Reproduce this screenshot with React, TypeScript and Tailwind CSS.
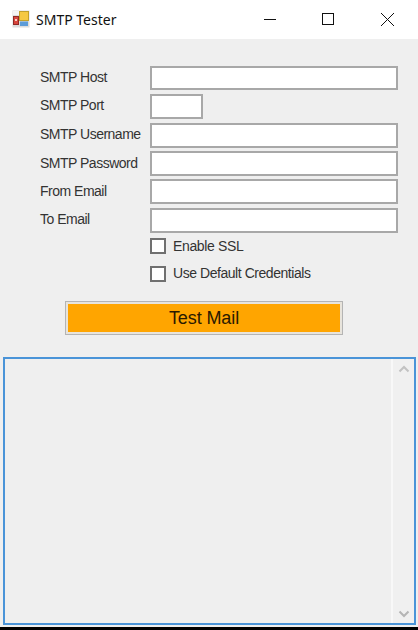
import React from 'react';

const fields = [
    { label: 'SMTP Host', inputClass: 'w-[248px]', rowClass: 'h-[24px] mb-[4px]', textClass: 'pb-[1px]' },
    { label: 'SMTP Port', inputClass: 'w-[53px]', rowClass: 'h-[25px] mb-[4px]', textClass: 'pb-[3px]' },
    { label: 'SMTP Username', inputClass: 'w-[248px]', rowClass: 'h-[25px] mb-[3px]', textClass: 'pb-[3px]' },
    { label: 'SMTP Password', inputClass: 'w-[248px]', rowClass: 'h-[25px] mb-[3px]', textClass: 'pb-[1px]' },
    { label: 'From Email', inputClass: 'w-[248px]', rowClass: 'h-[25px] mb-[4px]', textClass: 'pb-[1px]' },
    { label: 'To Email', inputClass: 'w-[248px]', rowClass: 'h-[25px] mb-[5px]', textClass: 'pb-[2px]' },
];

function AppIcon() {
    return (
        <svg width="18" height="18" viewBox="0 0 18 18" className="shrink-0">
            <rect x="0.5" y="0.5" width="17" height="17" fill="#dcdcdc" />
            <rect x="1" y="1" width="6" height="4" fill="#f4f4f4" />
            <rect x="7.5" y="1.5" width="9" height="9" fill="#f5c842" stroke="#c2a02a" />
            <rect x="1.5" y="6.5" width="5" height="8" fill="#d8453c" stroke="#8f2a26" />
            <rect x="3" y="9" width="2" height="2" fill="#f5d0c8" />
            <rect x="8" y="11.5" width="8" height="4.5" fill="#5b9bd8" />
        </svg>
    );
}

export default function App() {
    return (
        <div className="w-[418px] h-[630px] bg-black overflow-hidden font-['Liberation_Sans',sans-serif]">
            {/* Title bar */}
            <div className="h-[39px] bg-white flex items-center">
                <div className="ml-[12px] mr-[6px] mb-[2px]"><AppIcon /></div>
                <span className="text-[14px] text-[#111] mb-[1px] font-['Noto_Sans',sans-serif]">SMTP Tester</span>
                <div className="ml-auto flex items-center mr-[2px] mb-[1px]">
                    <svg width="58" height="14" viewBox="0 0 58 14">
                        <path d="M22 7.5H34" stroke="#111" strokeWidth="1" />
                    </svg>
                    <svg width="58" height="14" viewBox="0 0 58 14">
                        <rect x="22.5" y="1.5" width="11" height="11" fill="none" stroke="#111" strokeWidth="1" />
                    </svg>
                    <svg width="58" height="14" viewBox="0 0 58 14">
                        <path d="M23 1L36 14M36 1L23 14" stroke="#111" strokeWidth="1" fill="none" />
                    </svg>
                </div>
            </div>

            {/* Form body */}
            <div className="h-[588px] bg-[#efefef] pt-[27px] flex flex-col">
                <div className="pl-[40px]">
                    {fields.map((field) => (
                        <div key={field.label} className={`flex items-center ${field.rowClass}`}>
                            <span className={`w-[110px] text-[14px] tracking-[-0.5px] text-[#333] ${field.textClass}`}>{field.label}</span>
                            <div className={`h-full bg-white border-2 border-[#a8a8a8] ${field.inputClass}`} />
                        </div>
                    ))}
                    <div className="ml-[110px] flex items-center h-[17px] mb-[10px]">
                        <div className="w-[16px] h-[16px] mb-[2px] bg-white border-2 border-[#707070]" />
                        <span className="ml-[7px] text-[14px] tracking-[-0.35px] text-[#333]">Enable SSL</span>
                    </div>
                    <div className="ml-[110px] flex items-center h-[17px]">
                        <div className="w-[16px] h-[16px] bg-white border-2 border-[#707070]" />
                        <span className="ml-[7px] text-[14px] tracking-[-0.45px] text-[#333]">Use Default Credentials</span>
                    </div>
                </div>

                <div className="ml-[65px] mt-[19px] w-[278px] h-[34px] border border-[#b4b4b4] bg-[#e8e4dc] p-[2px] shrink-0">
                    <button className="w-full h-full bg-[#ffa500] text-[18px] tracking-[-0.1px] text-[#2a1a00]">
                        Test Mail
                    </button>
                </div>

                {/* Output box */}
                <div className="ml-[3px] mt-[22px] w-[413px] h-[268px] border-2 border-[#4a94d8] flex bg-[#efefef]">
                    <div className="flex-1" />
                    <div className="w-[23px] border-l-2 border-[#f8f8f8] bg-[#f0f0f0] flex flex-col items-center justify-between pt-[6px] pb-[5px]">
                        <svg width="12" height="8" viewBox="0 0 12 8">
                            <path d="M1.5 6.5L6 2L10.5 6.5" stroke="#c2c2c2" strokeWidth="2" fill="none" />
                        </svg>
                        <svg width="12" height="8" viewBox="0 0 12 8">
                            <path d="M1.5 1.5L6 6L10.5 1.5" stroke="#b5b5b5" strokeWidth="2" fill="none" />
                        </svg>
                    </div>
                </div>
            </div>
        </div>
    );
}
